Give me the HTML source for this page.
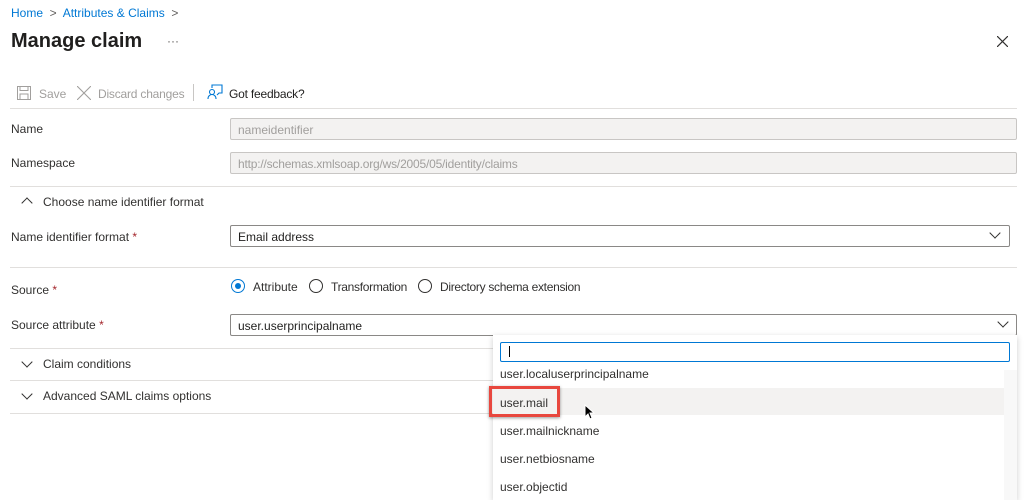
<!DOCTYPE html>
<html><head><style>
body{margin:0;width:1024px;height:500px;background:#fff;font-family:"Liberation Sans",sans-serif;color:#323130;position:relative;overflow:hidden;font-size:12px}
.a{position:absolute;white-space:nowrap}
.hr{position:absolute;left:10px;width:1007px;height:1px;background:#e1dfdd}
.box{position:absolute;border:1px solid #8a8886;border-radius:2px;box-sizing:border-box;height:22px;padding:4px 7px;font-size:12px}
.dis{background:#f3f2f1;border-color:#c8c6c4;color:#a19f9d}
.req{color:#a4262c}
.rad{position:absolute;width:14px;height:14px;border:1px solid #323130;border-radius:50%;box-sizing:border-box}
.chev{position:absolute;width:7px;height:7px;border-right:1.2px solid #323130;border-bottom:1.2px solid #323130}
.it{position:absolute;left:500px;font-size:12px}
</style></head><body>
<div class="a" style="left:11px;top:6px;color:#0078d4;font-size:12px">Home <span style="color:#605e5c">&nbsp;&gt;&nbsp;</span> Attributes &amp; Claims <span style="color:#605e5c">&nbsp;&gt;</span></div>
<div class="a" style="left:11px;top:30px;font-size:20px;font-weight:bold;color:#201f1e">Manage claim</div>
<div class="a" style="left:167px;top:34px;color:#605e5c">···</div>
<svg class="a" style="left:997px;top:36px" width="11" height="11" viewBox="0 0 11 11" stroke="#323130" stroke-width="1.2"><path d="M0 0L11 11M11 0L0 11"/></svg>
<svg class="a" style="left:17px;top:86px" width="14" height="14" viewBox="0 0 14 14" fill="none" stroke="#a19f9d"><rect x="0.5" y="0.5" width="13" height="13"/><rect x="3" y="0.5" width="8" height="4"/><rect x="3" y="8" width="8" height="5.5"/></svg>
<div class="a" style="left:39px;top:87px;color:#a19f9d">Save</div>
<svg class="a" style="left:77px;top:86px" width="14" height="14" viewBox="0 0 14 14" stroke="#a19f9d" stroke-width="1.1"><path d="M0 0L14 14M14 0L0 14"/></svg>
<div class="a" style="left:98px;top:87px;color:#a19f9d;letter-spacing:-0.2px">Discard changes</div>
<div class="a" style="left:193px;top:84px;width:1px;height:17px;background:#c8c6c4"></div>
<svg class="a" style="left:207px;top:84px" width="16" height="16" viewBox="0 0 16 16" fill="none" stroke="#0078d4" stroke-width="1.1"><circle cx="5" cy="8" r="2.5"/><path d="M1 15c0-3 2-4.5 4-4.5s4 1.5 4 4.5"/><path d="M5 4V1h10v8h-3l-2 2"/></svg>
<div class="a" style="left:229px;top:87px;color:#201f1e;letter-spacing:-0.2px">Got feedback?</div>
<div class="hr" style="top:108px"></div>
<div class="a" style="left:11px;top:122px">Name</div>
<div class="box dis" style="left:230px;top:118px;width:787px">nameidentifier</div>
<div class="a" style="left:11px;top:156px">Namespace</div>
<div class="box dis" style="left:230px;top:152px;width:787px;letter-spacing:-0.2px">http://schemas.xmlsoap.org/ws/2005/05/identity/claims</div>
<div class="hr" style="top:186px"></div>
<div class="chev" style="left:23px;top:199px;transform:rotate(225deg)"></div>
<div class="a" style="left:43px;top:195px">Choose name identifier format</div>
<div class="a" style="left:11px;top:230px">Name identifier format <span class="req">*</span></div>
<div class="box" style="left:230px;top:225px;width:780px;color:#201f1e">Email address</div>
<div class="chev" style="left:991px;top:229px;transform:rotate(45deg)"></div>
<div class="hr" style="top:267px"></div>
<div class="a" style="left:11px;top:283px">Source <span class="req">*</span></div>
<div class="rad" style="left:231px;top:279px;border-color:#0078d4"><div style="position:absolute;left:3px;top:3px;width:6px;height:6px;border-radius:50%;background:#0078d4"></div></div>
<div class="a" style="left:253px;top:280px">Attribute</div>
<div class="rad" style="left:309px;top:279px"></div>
<div class="a" style="left:331px;top:280px;letter-spacing:-0.3px">Transformation</div>
<div class="rad" style="left:418px;top:279px"></div>
<div class="a" style="left:440px;top:280px;letter-spacing:-0.3px">Directory schema extension</div>
<div class="a" style="left:11px;top:318px">Source attribute <span class="req">*</span></div>
<div class="box" style="left:230px;top:314px;width:787px;color:#201f1e">user.userprincipalname</div>
<div class="chev" style="left:999px;top:318px;transform:rotate(45deg)"></div>
<div class="hr" style="top:348px"></div>
<div class="chev" style="left:23px;top:358px;transform:rotate(45deg)"></div>
<div class="a" style="left:43px;top:357px">Claim conditions</div>
<div class="hr" style="top:380px"></div>
<div class="chev" style="left:23px;top:390px;transform:rotate(45deg)"></div>
<div class="a" style="left:43px;top:389px">Advanced SAML claims options</div>
<div class="hr" style="top:413px"></div>
<div class="a" style="left:493px;top:335px;width:524px;height:165px;background:#fff;box-shadow:0 2px 6px rgba(0,0,0,.2)"></div>
<div class="a" style="left:500px;top:342px;width:510px;height:20px;border:1.5px solid #0078d4;border-radius:2px;box-sizing:border-box"><div style="position:absolute;left:8px;top:3px;width:1px;height:11px;background:#000"></div></div>
<div class="a" style="left:1004px;top:370px;width:13px;height:130px;background:#f8f8f8"></div>
<div class="it" style="top:367px">user.localuserprincipalname</div>
<div class="a" style="left:493px;top:388px;width:511px;height:27px;background:#f3f2f1"></div>
<div class="a" style="left:489px;top:386px;width:71px;height:31px;border:3px solid #e8473e;box-sizing:border-box;box-shadow:0 1px 3px rgba(0,0,0,.4)"></div>
<div class="it" style="top:396px">user.mail</div>
<svg class="a" style="left:584px;top:404px" width="12" height="16" viewBox="0 0 12 16"><path d="M1 1v12l3-3 2 5 2-1-2-5h4z" fill="#000" stroke="#fff" stroke-width="1"/></svg>
<div class="it" style="top:424px">user.mailnickname</div>
<div class="it" style="top:452px">user.netbiosname</div>
<div class="it" style="top:480px">user.objectid</div>
</body></html>
